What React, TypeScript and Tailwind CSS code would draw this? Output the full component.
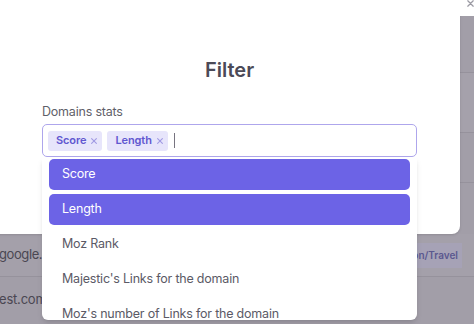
import React from 'react';

const options = [
  { label: 'Score', selected: true },
  { label: 'Length', selected: true },
  { label: 'Moz Rank', selected: false },
  { label: "Majestic's Links for the domain", selected: false },
  { label: "Moz's number of Links for the domain", selected: false },
];

const XIcon: React.FC<{ className?: string }> = ({ className }) => (
  <svg viewBox="0 0 10 10" className={className} fill="none" stroke="currentColor" strokeWidth="1.4" strokeLinecap="round">
    <path d="M2 2l6 6M8 2l-6 6" />
  </svg>
);

const Chip: React.FC<{ label: string }> = ({ label }) => (
  <span className="flex items-center gap-[4px] h-[20px] pl-[8px] pr-[4px] rounded-[3px] bg-[#e7e5fb] text-[11px] font-semibold tracking-[-0.1px] text-[#6157d0]">
    {label}
    <XIcon className="w-[8px] h-[8px] text-[#a19be3]" />
  </span>
);

export default function App() {
  return (
    <div
      className="relative w-[474px] h-[324px] overflow-hidden bg-[#a29ea8]"
      style={{ fontFamily: 'Inter, "Noto Sans", sans-serif' }}
    >
      {/* table behind the overlay */}
      <div className="flex flex-col text-[13px] text-[#4a4752]">
        <div className="h-[73px] border-b border-[#96929c]" />
        <div className="h-[60px] border-b border-[#96929c] bg-[#a5a1ab]" />
        <div className="h-[50px] border-b border-[#96929c]" />
        <div className="h-[51px]" />
        <div className="h-[43px] border-b border-[#96929c] flex items-center justify-between bg-[#a4a0aa]">
          <span className="-ml-[1px] tracking-[-0.4px]">google.com</span>
          <span className="mr-[12px] px-[4px] py-[5px] bg-[#a6a2b6] text-[10px] font-semibold text-[#5b588f]">
            Transportation/Travel
          </span>
        </div>
        <div className="h-[46px] flex items-center">
          <span className="-ml-[1px] tracking-[-0.2px]">est.com</span>
        </div>
      </div>

      {/* modal */}
      <div className="absolute left-[-20px] top-[-20px] w-[480px] h-[254px] bg-white rounded-b-[8px] shadow-sm">
        <div className="flex flex-col pt-[76px] pl-[62px] pr-[43px]">
          <h2 className="text-center text-[20px] font-semibold text-[#4b4a57] leading-[28px]">Filter</h2>
          <label className="mt-[20px] text-[12.5px] tracking-[-0.2px] text-[#5f5f69] leading-[16px]">Domains stats</label>
          <div className="mt-[4px] h-[33px] w-[375px] border border-[#aea6ec] rounded-[5px] flex items-center gap-[5px] px-[5px]">
            <Chip label="Score" />
            <Chip label="Length" />
            <span className="ml-[1px] w-[1.5px] h-[15px] bg-[#777480]" />
          </div>
        </div>
      </div>

      {/* close button */}
      <div className="absolute left-[449px] top-[-10px] w-[32px] h-[26px] bg-white rounded-[6px] flex items-end justify-start pl-[17px] pb-[8px]">
        <XIcon className="w-[9px] h-[9px] text-[#9b9aa3]" />
      </div>

      {/* dropdown */}
      <div className="absolute left-[42px] top-[157px] w-[375px] h-[163px] bg-white rounded-b-[6px] shadow-md overflow-hidden">
        <ul className="flex flex-col gap-[4px] px-[7px] pt-[2px]">
          {options.map(opt => (
            <li
              key={opt.label}
              className={
                opt.selected
                  ? 'h-[31px] shrink-0 flex items-center pl-[13px] rounded-[5px] bg-[#6c63e6] text-white text-[12.5px] tracking-[-0.2px]'
                  : 'h-[31px] shrink-0 flex items-center pl-[13px] text-[#5b5a66] text-[12.5px] tracking-[-0.2px]'
              }
            >
              {opt.label}
            </li>
          ))}
        </ul>
      </div>
    </div>
  );
}
